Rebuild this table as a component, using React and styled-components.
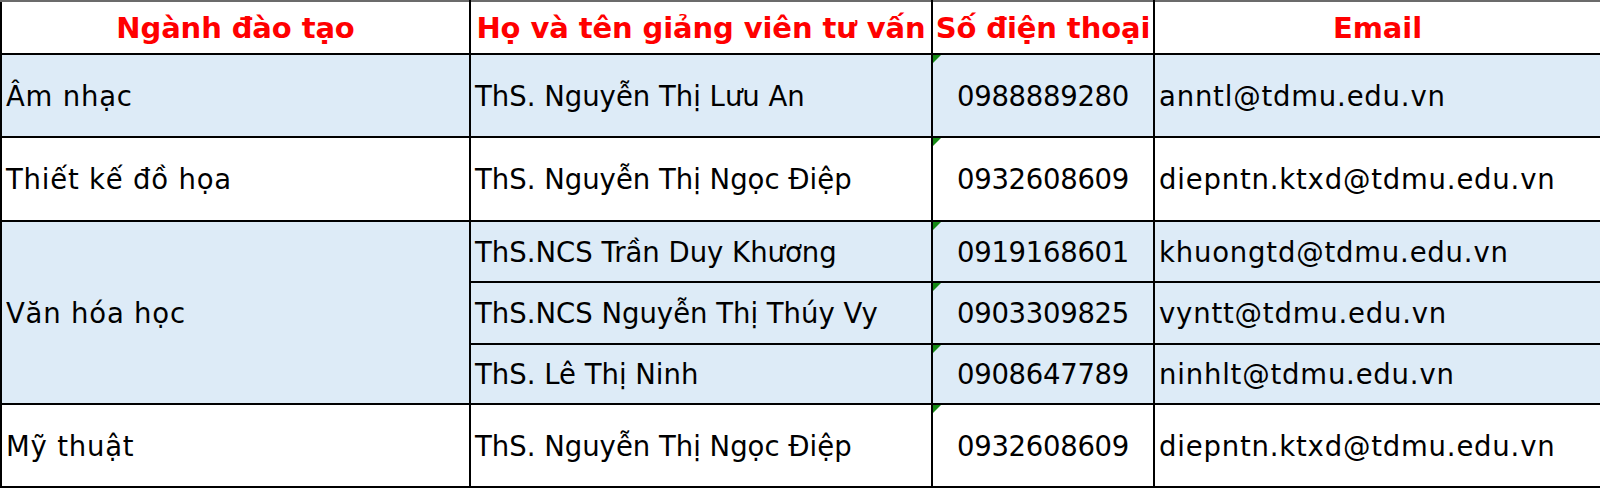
import React from 'react'
import styled, { createGlobalStyle, css } from 'styled-components'

const GlobalStyle = createGlobalStyle`
  html, body {
    margin: 0;
    padding: 0;
    background: #fff;
  }
  body {
    font-family: 'Century Gothic', 'DejaVu Sans', sans-serif;
    overflow: hidden;
  }
`

const Sheet = styled.table`
  border-collapse: collapse;
  table-layout: fixed;
  width: 1600px;
  color: #000;
`

const HeadCell = styled.th`
  border: 2px solid #000;
  border-top-color: #6b6b6b;
  background: #fff;
  color: #ff0000;
  font-size: 29px;
  font-weight: 700;
  text-align: center;
  vertical-align: middle;
  padding: 0 2px;
  white-space: nowrap;
  letter-spacing: -0.1px;
`

const Row = styled.tr`
  height: ${p => p.$h}px;
`

const Cell = styled.td`
  border: 2px solid #000;
  background: ${p => (p.$shade ? '#ddebf7' : '#fff')};
  font-size: 27.5px;
  font-weight: 400;
  text-align: ${p => (p.$center ? 'center' : 'left')};
  vertical-align: middle;
  padding: 0 4px;
  white-space: nowrap;
  position: relative;
  letter-spacing: ${p => p.$spacing || 0}px;

  ${p => p.$flag && css`
    &::before {
      content: '';
      position: absolute;
      top: 0;
      left: 0;
      border-style: solid;
      border-width: 8px 8px 0 0;
      border-color: #168a16 transparent transparent transparent;
    }
  `}
`

const majors = [
  {
    name: 'Âm nhạc',
    shade: true,
    people: [{ name: 'ThS. Nguyễn Thị Lưu An', phone: '0988889280', email: 'anntl@tdmu.edu.vn', h: 83 }],
  },
  {
    name: 'Thiết kế đồ họa',
    shade: false,
    people: [{ name: 'ThS. Nguyễn Thị Ngọc Điệp', phone: '0932608609', email: 'diepntn.ktxd@tdmu.edu.vn', h: 84 }],
  },
  {
    name: 'Văn hóa học',
    shade: true,
    people: [
      { name: 'ThS.NCS Trần Duy Khương', phone: '0919168601', email: 'khuongtd@tdmu.edu.vn', h: 61 },
      { name: 'ThS.NCS Nguyễn Thị Thúy Vy', phone: '0903309825', email: 'vyntt@tdmu.edu.vn', h: 62 },
      { name: 'ThS. Lê Thị Ninh', phone: '0908647789', email: 'ninhlt@tdmu.edu.vn', h: 60 },
    ],
  },
  {
    name: 'Mỹ thuật',
    shade: false,
    people: [{ name: 'ThS. Nguyễn Thị Ngọc Điệp', phone: '0932608609', email: 'diepntn.ktxd@tdmu.edu.vn', h: 83 }],
  },
]

export default function App() {
  return (
    <>
      <GlobalStyle />
      <Sheet>
        <colgroup>
          <col style={{ width: 469 }} />
          <col style={{ width: 462 }} />
          <col style={{ width: 222 }} />
          <col style={{ width: 447 }} />
        </colgroup>
        <thead>
          <Row $h={53}>
            <HeadCell>Ngành đào tạo</HeadCell>
            <HeadCell>Họ và tên giảng viên tư vấn</HeadCell>
            <HeadCell>Số điện thoại</HeadCell>
            <HeadCell>Email</HeadCell>
          </Row>
        </thead>
        <tbody>
          {majors.map(m =>
            m.people.map((p, i) => (
              <Row key={m.name + i} $h={p.h}>
                {i === 0 && (
                  <Cell $shade={m.shade} $spacing={0.8} rowSpan={m.people.length}>
                    {m.name}
                  </Cell>
                )}
                <Cell $shade={m.shade}>{p.name}</Cell>
                <Cell $shade={m.shade} $center $flag $spacing={-0.3}>{p.phone}</Cell>
                <Cell $shade={m.shade} $spacing={0.8}>{p.email}</Cell>
              </Row>
            ))
          )}
        </tbody>
      </Sheet>
    </>
  )
}
